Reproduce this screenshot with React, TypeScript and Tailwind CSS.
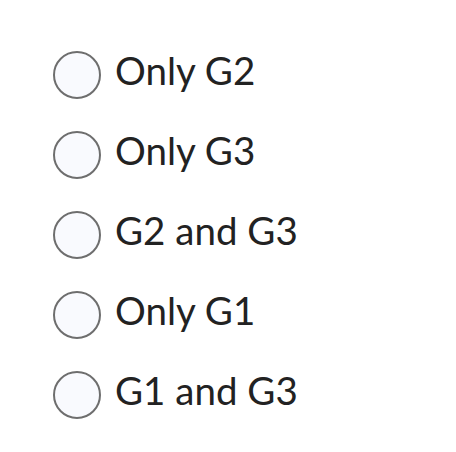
export default function App() {
  const items = ["Only G2", "Only G3", "G2 and G3", "Only G1", "G1 and G3"];
  return (
    <div className="w-[456px] h-[452px] bg-white pt-[51px] pl-[53px]" style={{ fontFamily: "Lato, sans-serif" }}>
      <div className="flex flex-col gap-[32px]">
        {items.map((t) => (
          <div key={t} className="flex items-center gap-[14px] h-[48px]">
            <div className="w-[48px] h-[48px] rounded-full border-2 border-[#6e6e6e] bg-[#f9fafe] shrink-0" />
            <span className="text-[38.5px] leading-none pb-[10px] text-[#222222]">{t}</span>
          </div>
        ))}
      </div>
    </div>
  );
}
